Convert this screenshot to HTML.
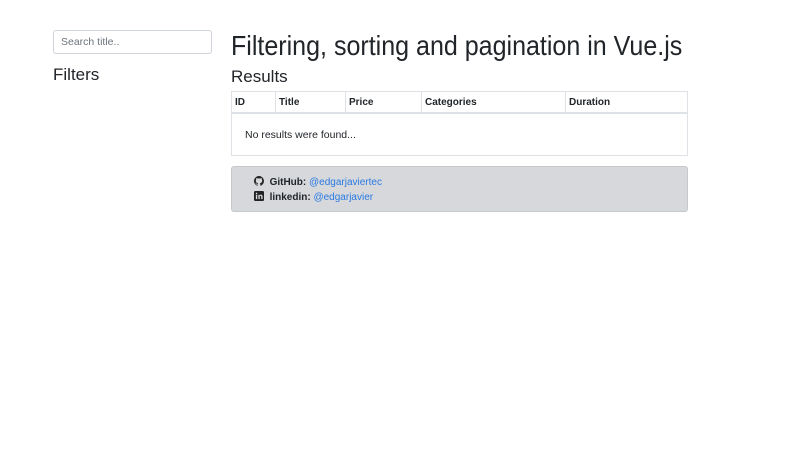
<!DOCTYPE html>
<html><head><meta charset="utf-8"><style>
body{margin:0;width:800px;height:450px;background:#fff;font-family:"Liberation Sans",sans-serif;color:#212529;position:relative;overflow:hidden}
.a{position:absolute;white-space:nowrap}
input{position:absolute;left:53px;top:30px;width:159px;height:24px;box-sizing:border-box;border:1px solid #ced4da;border-radius:3px;font:10.5px "Liberation Sans",sans-serif;padding:0 7px;color:#6c757d}
table{position:absolute;left:231px;top:91px;width:457px;border-collapse:collapse;font-size:10px}
th{border:1px solid #dee2e6;border-bottom:2px solid #dee2e6;text-align:left;height:20px;padding:0 3px;font-weight:bold}
td{border:1px solid #dee2e6;height:41px;padding:0 13px;font-size:10.5px}
.box{position:absolute;left:231px;top:166px;width:457px;height:46px;box-sizing:border-box;background:#d6d8db;border:1px solid #c6c8ca;border-radius:3px;font-size:10px}
a{color:#2a7ae2;text-decoration:none}
</style></head><body>
<input value="Search title..">
<div class="a" style="left:53px;top:65px;font-size:17px">Filters</div>
<div class="a" style="left:231px;top:30px;font-size:28px;transform:scaleX(0.894);transform-origin:left">Filtering, sorting and pagination in Vue.js</div>
<div class="a" style="left:231px;top:67px;font-size:17px">Results</div>
<table><tr><th style="width:37px">ID</th><th style="width:63px">Title</th><th style="width:69px">Price</th><th style="width:137px">Categories</th><th>Duration</th></tr>
<tr><td colspan="5">No results were found...</td></tr></table>
<div class="box">
<div class="a" style="left:22px;top:9px"><svg width="10" height="10" viewBox="0 0 16 16" style="vertical-align:-1px"><path fill="#222" d="M8 0a8 8 0 00-2.5 15.6c.4 0 .5-.2.5-.4v-1.5c-2.2.5-2.7-1-2.7-1-.4-.9-.9-1.2-.9-1.2-.7-.5.1-.5.1-.5.8.1 1.2.8 1.2.8.7 1.3 1.9.9 2.300.7.1-.5.3-.9.5-1.1-1.8-.2-3.6-.9-3.6-4 0-.9.3-1.6.8-2.1-.1-.2-.4-1 .1-2.1 0 0 .7-.2 2.2.8a7.4 7.4 0 014 0c1.5-1 2.2-.8 2.2-.8.4 1.1.2 1.9.1 2.1.5.6.8 1.300.8 2.1 0 3.1-1.9 3.8-3.6 4 .3.3.6.8.6 1.5v2.2c0 .2.1.5.6.4A8 8 0 008 0z"/></svg>&nbsp; <b>GitHub:</b> <a>@edgarjaviertec</a></div>
<div class="a" style="left:22px;top:24px"><svg width="10" height="10" viewBox="0 0 16 16" style="vertical-align:-1px"><rect width="16" height="16" rx="2" fill="#222"/><rect x="3" y="6" width="2.2" height="7" fill="#d6d8db"/><circle cx="4.1" cy="3.8" r="1.3" fill="#d6d8db"/><path fill="#d6d8db" d="M7 6h2v1c.5-.8 1.3-1.2 2.3-1.2 1.6 0 2.4 1 2.4 2.8V13h-2.2V9c0-.9-.3-1.4-1-1.4S9.2 8.1 9.2 9v4H7z"/></svg>&nbsp; <b>linkedin:</b> <a>@edgarjavier</a></div>
</div>
</body></html>
